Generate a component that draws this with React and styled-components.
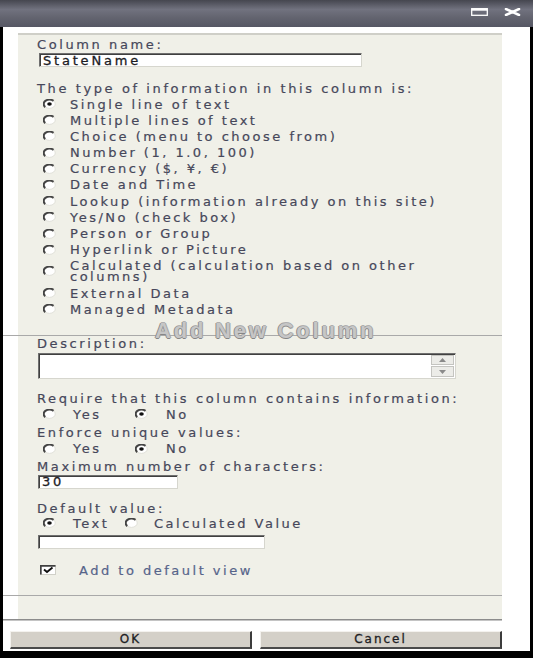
import styled, { createGlobalStyle } from "styled-components";

const Global = createGlobalStyle`
  html, body {
    margin: 0;
    padding: 0;
    background: #000;
  }
  body {
    font-family: "DejaVu Sans", Verdana, sans-serif;
  }
`;

const TYPES = [
  "Single line of text",
  "Multiple lines of text",
  "Choice (menu to choose from)",
  "Number (1, 1.0, 100)",
  "Currency ($, ¥, €)",
  "Date and Time",
  "Lookup (information already on this site)",
  "Yes/No (check box)",
  "Person or Group",
  "Hyperlink or Picture",
  "Calculated (calculation based on other columns)",
  "External Data",
  "Managed Metadata",
];

// classic sunken radio button
const Radio = ({ checked }) => (
  <svg width="13" height="10" viewBox="0 0 13 10" style={{ flex: "none" }}>
    <ellipse cx="6.5" cy="5" rx="5.4" ry="4" fill="#fff" />
    <path d="M2.4 8.1 A5.7 4.3 0 0 1 10.6 1.9" fill="none" stroke="#444" strokeWidth="2" />
    <path d="M10.6 1.9 A5.7 4.3 0 0 1 2.4 8.1" fill="none" stroke="#e2e2dc" strokeWidth="1" />
    {checked && <ellipse cx="6.5" cy="5" rx="2.3" ry="1.7" fill="#111" />}
  </svg>
);

const CheckBox = () => (
  <svg width="16" height="10" viewBox="0 0 16 10" style={{ flex: "none" }}>
    <rect x="0.5" y="0.5" width="15" height="9" fill="#fff" stroke="#d0d0c8" />
    <path d="M0.8 9.5 V0.8 H15.5" fill="none" stroke="#404040" strokeWidth="1.8" />
    <path d="M4 4.5 L7 7 L12.5 2.5" fill="none" stroke="#111" strokeWidth="1.9" />
  </svg>
);

const Window = styled.div`
  width: 533px;
  height: 658px;
  display: flex;
  flex-direction: column;
  background: #000;
`;

const TitleBar = styled.div`
  height: 27px;
  flex: none;
  box-sizing: border-box;
  display: flex;
  justify-content: flex-end;
  align-items: flex-start;
  gap: 16px;
  padding: 8px 12px 0 0;
  background: linear-gradient(#45464f 0%, #71727f 35%, #63646f 65%, #565764 100%);
`;

const Body = styled.div`
  flex: 1;
  margin: 0 3px 7px;
  padding-top: 6px;
  background: #fff;
  display: flex;
  flex-direction: column;
`;

const Panel = styled.div`
  width: 484px;
  margin-left: 15px;
  box-sizing: border-box;
  background: #f0f0e8;
  padding: ${(p) => p.$pad || "0"};
  border-top: ${(p) => (p.$top ? "2px solid #cfcfc8" : "none")};
  height: ${(p) => (p.$h ? `${p.$h}px` : "auto")};
`;

const Divider = styled.div`
  position: relative;
  width: 499px;
  height: 1px;
  background: #a9a9a9;
  flex: none;
`;

const HeavyDivider = styled.div`
  width: 499px;
  height: 0;
  border-top: 1px solid #8c8c8c;
  border-bottom: 1px solid #c4c4c4;
  flex: none;
`;

const Watermark = styled.div`
  position: absolute;
  left: 152px;
  top: -15px;
  font: bold 22px/22px "Liberation Sans", Arial, sans-serif;
  letter-spacing: 2.8px;
  color: #c6c6c6;
  white-space: nowrap;
  text-shadow: -1px 0 #8f8f8f, 0 1px #868686, 1px 0 #a8a8a8, 0 -1px #b0b0b0;
`;

const Label = styled.div`
  font-size: 13px;
  line-height: 14px;
  letter-spacing: 2.6px;
  color: #46475a;
  -webkit-text-stroke: 0.2px #46475a;
  white-space: nowrap;
  margin-top: ${(p) => p.$mt || 0}px;
`;

const Field = styled.input`
  display: block;
  box-sizing: border-box;
  width: ${(p) => p.$w}px;
  height: 14px;
  margin: ${(p) => p.$mt || 0}px 0 0 ${(p) => p.$ml ?? 1}px;
  padding: 0 0 0 3px;
  border: 1px solid;
  border-color: #6f6f6f #d6d6ce #d6d6ce #6f6f6f;
  box-shadow: inset 1px 1px 0 #404040;
  background: #fff;
  font: 13px/12px "DejaVu Sans", Verdana, sans-serif;
  letter-spacing: 2.8px;
  color: #1c1c24;
  -webkit-text-stroke: 0.3px #1c1c24;
  outline: none;
`;

const TextBox = styled.div`
  box-sizing: border-box;
  width: 418px;
  height: 26px;
  margin: 2px 0 0 1px;
  padding: 1px;
  display: flex;
  justify-content: flex-end;
  border: 1px solid;
  border-color: #6f6f6f #d6d6ce #d6d6ce #6f6f6f;
  box-shadow: inset 1px 1px 0 #404040;
  background: #fff;
`;

const ScrollCol = styled.div`
  width: 23px;
  display: flex;
  flex-direction: column;
  gap: 1px;
`;

const ScrollBtn = styled.div`
  flex: 1;
  display: flex;
  align-items: center;
  justify-content: center;
  background: #ecece8;
  border: 1px solid #c4c4c0;
`;

const RadioList = styled.div`
  display: flex;
  flex-direction: column;
  gap: 5.2px;
  margin: 2.5px 0 0 6px;
`;

const RadioItem = styled.div`
  display: flex;
  align-items: center;
  height: ${(p) => (p.$tall ? "auto" : "11px")};
`;

const ItemText = styled.span`
  max-width: 395px;
  margin-left: ${(p) => p.$gap || 14}px;
  font-size: 13px;
  line-height: 11px;
  letter-spacing: 2.5px;
  color: ${(p) => p.$color || "#46475a"};
  -webkit-text-stroke: 0.2px ${(p) => p.$color || "#46475a"};
`;

const ChoiceRow = styled.div`
  display: flex;
  align-items: center;
  height: 11px;
  margin: ${(p) => p.$mt || 0}px 0 0 6px;
`;

const Option = styled.div`
  display: flex;
  align-items: center;
  width: ${(p) => (p.$w ? `${p.$w}px` : "auto")};
`;

const CheckRow = styled.div`
  display: flex;
  align-items: center;
  height: 11px;
  margin: 16px 0 0 3px;
`;

const Footer = styled.div`
  height: 30px;
  box-sizing: border-box;
  padding: 10px 28px 0 7px;
  display: grid;
  grid-template-columns: 1fr 1fr;
  gap: 8px;
`;

const Button = styled.button`
  height: 18px;
  padding: 0;
  background: #d4d0c8;
  border: none;
  border-top: 1px solid #f4f2ee;
  border-left: 1px solid #f4f2ee;
  border-right: 2px solid #3c3c3c;
  border-bottom: 2px solid #4a4a4a;
  font: 12px/14px "DejaVu Sans", Verdana, sans-serif;
  letter-spacing: 2px;
  color: #1e1e24;
  -webkit-text-stroke: 0.3px #1e1e24;
`;

const Arrow = ({ up }) => (
  <svg width="7" height="4" viewBox="0 0 7 4">
    <path d={up ? "M0 4 L3.5 0 L7 4 Z" : "M0 0 L3.5 4 L7 0 Z"} fill="#8a8a8a" />
  </svg>
);

const YesNo = ({ mt }) => (
  <ChoiceRow $mt={mt}>
    <Option $w={92}>
      <Radio />
      <ItemText $gap={17}>Yes</ItemText>
    </Option>
    <Option>
      <Radio checked />
      <ItemText $gap={18}>No</ItemText>
    </Option>
  </ChoiceRow>
);

export default function App() {
  return (
    <Window>
      <Global />
      <TitleBar>
        <svg width="17" height="8" viewBox="0 0 17 8">
          <rect x="0.7" y="0.7" width="15.6" height="6.6" fill="none" stroke="#fff" strokeWidth="1.3" />
          <rect x="0.7" y="0.7" width="15.6" height="2" fill="#fff" />
        </svg>
        <svg width="17" height="8" viewBox="0 0 17 8">
          <path d="M2 1 L15 7 M15 1 L2 7" stroke="#fff" strokeWidth="2.6" strokeLinecap="round" />
        </svg>
      </TitleBar>

      <Body>
        <Panel $top $pad="3px 0 20px 19px">
          <Label>Column name:</Label>
          <Field $w={323} $ml={2} $mt={1} defaultValue="StateName" />
          <Label $mt={15}>The type of information in this column is:</Label>
          <RadioList>
            {TYPES.map((t, i) => (
              <RadioItem key={t} $tall={t.startsWith("Calculated")}>
                <Radio checked={i === 0} />
                <ItemText>{t}</ItemText>
              </RadioItem>
            ))}
          </RadioList>
        </Panel>

        <Divider>
          <Watermark>Add New Column</Watermark>
        </Divider>

        <Panel $pad="1px 0 19px 19px">
          <Label>Description:</Label>
          <TextBox>
            <ScrollCol>
              <ScrollBtn>
                <Arrow up />
              </ScrollBtn>
              <ScrollBtn>
                <Arrow />
              </ScrollBtn>
            </ScrollCol>
          </TextBox>
          <Label $mt={13}>Require that this column contains information:</Label>
          <YesNo mt={3} />
          <Label $mt={6}>Enforce unique values:</Label>
          <YesNo mt={3.5} />
          <Label $mt={5.5}>Maximum number of characters:</Label>
          <Field $w={140} $mt={1} defaultValue="30" />
          <Label $mt={13}>Default value:</Label>
          <ChoiceRow $mt={2}>
            <Option $w={82}>
              <Radio checked />
              <ItemText $gap={17}>Text</ItemText>
            </Option>
            <Option>
              <Radio />
              <ItemText $gap={16}>Calculated Value</ItemText>
            </Option>
          </ChoiceRow>
          <Field $w={227} $mt={6} defaultValue="" />
          <CheckRow>
            <CheckBox />
            <ItemText $gap={23} $color="#56648a">Add to default view</ItemText>
          </CheckRow>
        </Panel>

        <Divider />
        <Panel $h={23} />
        <HeavyDivider />

        <Footer>
          <Button>OK</Button>
          <Button>Cancel</Button>
        </Footer>
      </Body>
    </Window>
  );
}
